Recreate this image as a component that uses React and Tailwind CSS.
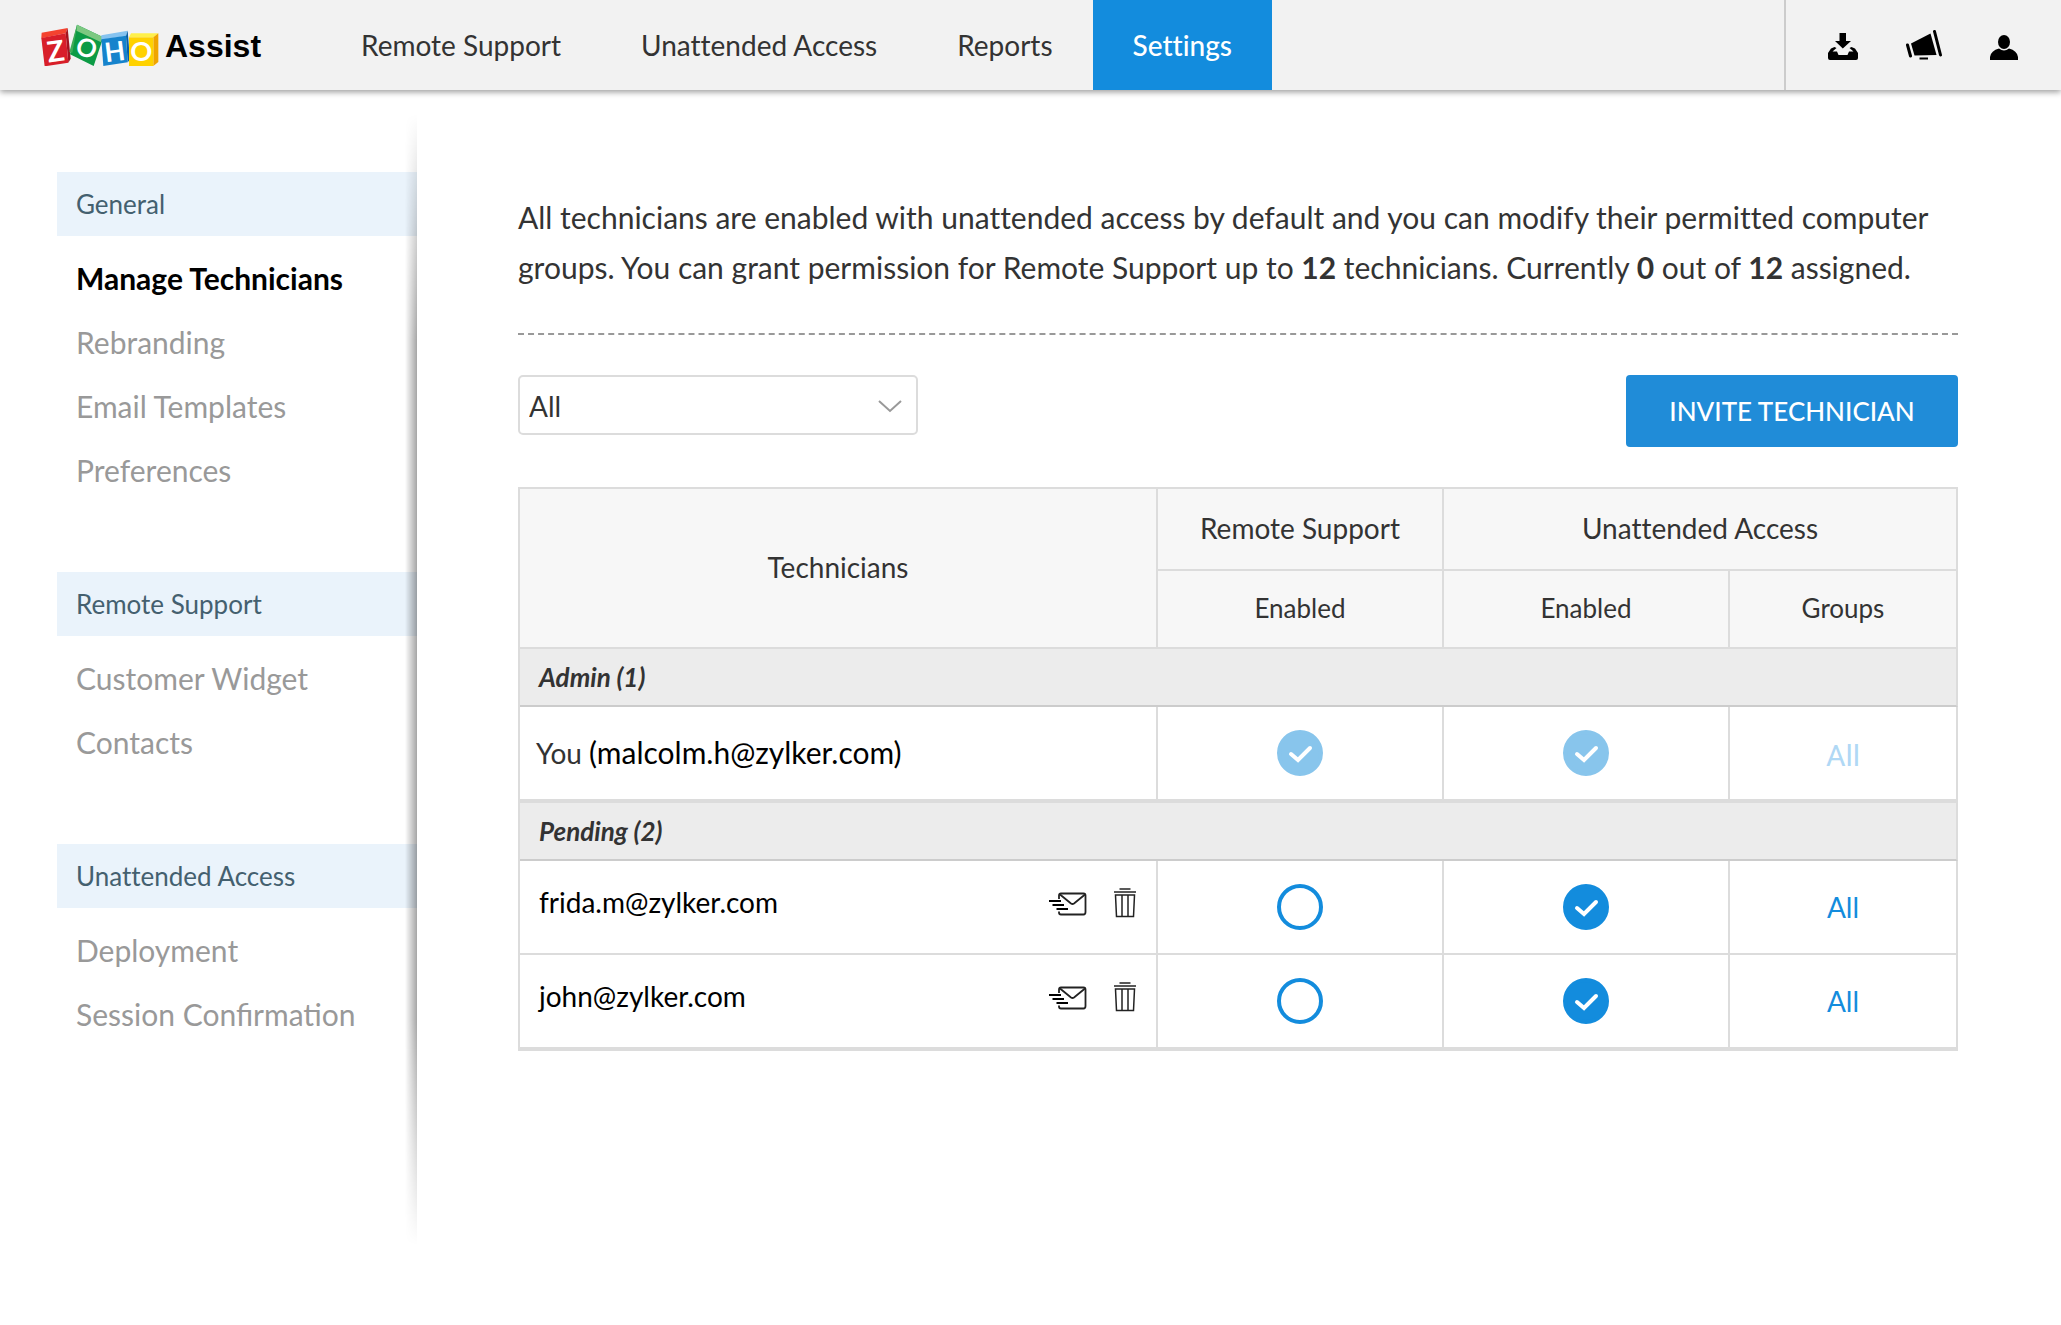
import React, { useState } from "react";

const navItems = ["Remote Support", "Unattended Access", "Reports", "Settings"];

const sections = [
  {
    title: "General",
    items: ["Manage Technicians", "Rebranding", "Email Templates", "Preferences"],
  },
  { title: "Remote Support", items: ["Customer Widget", "Contacts"] },
  { title: "Unattended Access", items: ["Deployment", "Session Confirmation"] },
];

const Logo = () => (
  <svg className="w-[119px] h-[42px]" viewBox="0 0 357 126" aria-hidden="true">
    <g fontFamily="Lato, sans-serif" fontWeight="700" fill="#fff" textAnchor="middle">
      {/* red cube */}
      <path d="M2 26 L80 12 L74 28 L1 43 Z" fill="#f4432f" />
      <path d="M74 28 L80 12 L89 104 L82 116 Z" fill="#a31420" />
      <path d="M1 42 L74 28 L82 116 L11 127 Z" fill="#d81f2a" />
      <text x="44" y="112" fontSize="86" transform="rotate(-8 44 81)">Z</text>
      {/* green cube */}
      <path d="M108 2 L187 40 L158 126 L87 91 Z" fill="#0c9b45" />
      <path d="M108 2 L187 40 L179 54 L106 20 Z" fill="#7cc881" />
      <path d="M108 2 L106 20 L94 86 L85 84 Z" fill="#3fab58" />
      <text x="137" y="99" fontSize="76" transform="rotate(22 137 72)">O</text>
      {/* blue cube */}
      <path d="M181 34 L260 20 L255 36 L181 47 Z" fill="#86c3f0" />
      <path d="M255 36 L260 20 L267 107 L260 115 Z" fill="#0a5fa3" />
      <path d="M181 46 L255 35 L260 115 L187 126 Z" fill="#1683cc" />
      <text x="221" y="111" fontSize="80" transform="rotate(-7 221 82)">H</text>
      {/* yellow cube */}
      <path d="M264 40 L270 28 L352 28 L337 40 Z" fill="#fff04a" />
      <path d="M337 40 L352 28 L352 114 L337 126 Z" fill="#f0a500" />
      <path d="M264 40 H337 V126 H264 Z" fill="#ffd200" />
      <text x="301" y="112" fontSize="82">O</text>
    </g>
  </svg>
);

const DownloadIcon = () => (
  <svg className="w-[30px] h-[27px]" viewBox="0 0 30 27" aria-hidden="true">
    <path d="M11.500 0 H18 V8 H23 L14.800 15.500 L7 8 H11.500 Z" />
    <path d="M6.500 14 L3 15.500 L0 20 V25 Q0 27 2 27 H28 Q30 27 30 25 V20 L27 15.500 L23.500 14 L21.500 15 L25.500 18.500 H21 L19.500 22 H10.500 L9 18.500 H4.500 L8.500 15 Z" />
  </svg>
);

const MegaphoneIcon = () => (
  <svg className="w-[36px] h-[30px]" viewBox="0 0 36 30" aria-hidden="true">
    <path d="M5 13.500 L24.500 3.500 L30.500 25 L8.500 25.500 Z" />
    <path d="M1.500 15 L4.500 26" stroke="#000" strokeWidth="3" strokeLinecap="round" />
    <path d="M28.500 1.500 L34.500 25" stroke="#000" strokeWidth="3" strokeLinecap="round" />
    <path d="M13.500 28.500 H22" stroke="#000" strokeWidth="2" />
  </svg>
);

const UserIcon = () => (
  <svg className="w-[28px] h-[25px]" viewBox="0 0 28 25" aria-hidden="true">
    <ellipse cx="14" cy="7" rx="6" ry="7" />
    <path d="M0 25 V22 Q1 15.500 9 13.500 Q14 17.500 19 13.500 Q27 15.500 28 22 V25 Z" />
  </svg>
);

const SendMailIcon = () => (
  <svg className="w-[38px] h-[24px]" viewBox="0 0 38 24" fill="none" stroke="#222" strokeWidth="1.800" aria-hidden="true">
    <path d="M10 7 V3.500 Q10 1.500 12 1.500 H34.500 Q36.500 1.500 36.500 3.500 V20 Q36.500 22.500 34.500 22.500 H12 Q10 22.500 10 20.500 V19.500" />
    <path d="M11 2.500 L22 11.500 Q23.500 12.500 25 11.500 L36 2.500" />
    <path d="M0 9 H12 M3.500 13 H15 M7.500 17 H19" stroke="#000" />
  </svg>
);

const TrashIcon = () => (
  <svg className="w-[22px] h-[30px]" viewBox="0 0 22 30" fill="none" stroke="#222" strokeWidth="1.500" aria-hidden="true">
    <path d="M5.500 1 H16.500" />
    <path d="M0 4 H22" />
    <path d="M1.500 7 H20.500 L19.500 28.500 H2.500 Z" />
    <path d="M8 7 V28 M14 7 V28" />
  </svg>
);

const Toggle = ({ label, defaultChecked, disabled }) => (
  <div className="relative flex w-[46px] h-[46px] mx-auto">
    <input
      type="checkbox"
      aria-label={label}
      defaultChecked={defaultChecked}
      disabled={disabled}
      className="peer appearance-none w-full h-full rounded-full border-4 border-[#138cdd] bg-white checked:bg-[#138cdd] disabled:border-[#88c5ec] disabled:checked:bg-[#88c5ec]"
    />
    <svg
      className="hidden peer-checked:block absolute inset-0 pointer-events-none"
      viewBox="0 0 46 46"
      fill="none"
      stroke="#fff"
      strokeWidth="4"
      strokeLinecap="round"
      aria-hidden="true"
    >
      <path d="M14 24 L21 30 L33 18" />
    </svg>
  </div>
);

const headCell = "pb-[2px] bg-[#f7f7f7] border-r-2 border-b-2 border-[#dcdcdc] font-normal";
const bodyCell = "border-r-2 border-[#dcdcdc] text-center";

const GroupRow = ({ children }) => (
  <tr className="h-[58px]">
    <th
      colSpan={4}
      scope="colgroup"
      className="bg-[#ececec] border-r-2 border-b-2 border-r-[#dcdcdc] border-b-[#ccc] pl-[19px] text-left text-[26px] font-bold italic"
    >
      {children}
    </th>
  </tr>
);

const PendingRow = ({ email, last }) => {
  const line = last ? "border-b-4" : "border-b-2";
  return (
    <tr className={last ? "h-[96px]" : "h-[94px]"}>
      <td className={`${bodyCell} ${line}`}>
        <div className="flex items-center pl-[19px] pr-[20px] pb-[6px] text-black">
          <span className="flex-1 pb-1 text-left text-[28px]">{email}</span>
          <button type="button" aria-label={`Resend invitation to ${email}`} className="mr-[27px]">
            <SendMailIcon />
          </button>
          <button type="button" aria-label={`Delete ${email}`} className="pb-[2px]">
            <TrashIcon />
          </button>
        </div>
      </td>
      <td className={`${bodyCell} ${line}`}>
        <Toggle label={`Remote Support for ${email}`} />
      </td>
      <td className={`${bodyCell} ${line}`}>
        <Toggle label={`Unattended Access for ${email}`} defaultChecked />
      </td>
      <td className={`${bodyCell} ${line}`}>
        <a href="#groups" className="text-[28px] text-[#138cdd]">All</a>
      </td>
    </tr>
  );
};

const App = () => {
  const [filter, setFilter] = useState("All");

  return (
    <div className="min-h-screen bg-white font-['Lato',sans-serif] text-[#333] [font-variant-ligatures:no-common-ligatures]">
      <header className="relative flex h-[90px] bg-[#f2f2f2] shadow-[0_2px_6px_rgba(0,0,0,0.4)]">
        <a href="#home" className="flex items-center w-[321px] pl-[41px] text-black">
          <Logo />
          <span className="ml-[5px] pt-[2px] font-['Liberation_Sans',sans-serif] text-[32px] font-bold">Assist</span>
        </a>
        <nav className="flex flex-1">
          {navItems.map((item) => (
            <a
              key={item}
              href="#nav"
              className={`flex items-center px-10 text-[28px] ${
                item === "Settings" ? "bg-[#138cdd] font-medium text-white" : ""
              }`}
            >
              {item}
            </a>
          ))}
        </nav>
        <div className="flex items-end gap-12 pl-[42px] pr-[43px] pb-[30px] border-l-2 border-[#ccc]">
          <button type="button" aria-label="Downloads"><DownloadIcon /></button>
          <button type="button" aria-label="Announcements"><MegaphoneIcon /></button>
          <button type="button" aria-label="Account"><UserIcon /></button>
        </div>
      </header>

      <div className="flex">
        <aside className="relative shrink-0 w-[417px] h-[1155px] pt-[82px] pl-[57px]">
          {sections.map((section) => (
            <section key={section.title} className="mb-[70px]">
              <h2 className="flex items-center h-16 mb-[10px] pl-[19px] bg-[#eaf3fb] text-[26px] text-[#44606f]">
                {section.title}
              </h2>
              <ul className="[font-variant-ligatures:normal]">
                {section.items.map((item) => (
                  <li key={item} className="flex items-center h-16 pl-[19px] text-[30px]">
                    <a
                      href="#settings"
                      className={item === "Manage Technicians" ? "font-bold text-black" : "text-[#999]"}
                    >
                      {item}
                    </a>
                  </li>
                ))}
              </ul>
            </section>
          ))}
          <div className="absolute right-0 top-6 bottom-0 w-3 bg-linear-to-l from-black/35 to-transparent mask-y-from-80% mask-y-to-100%" />
        </aside>

        <main className="flex-1 pt-[102px] pl-[101px] pr-[103px]">
          <p className="text-[30px] leading-[50px]">
            All technicians are enabled with unattended access by default and you can modify their permitted computer
            groups. You can grant permission for Remote Support up to <b>12</b> technicians. Currently <b>0</b> out of{" "}
            <b>12</b> assigned.
          </p>

          <div className="mt-[41px] pt-10 flex items-start justify-between border-t-2 border-dashed border-[#999]">
            <div className="relative w-[400px]">
              <select
                aria-label="Filter technicians"
                value={filter}
                onChange={(e) => setFilter(e.target.value)}
                className="appearance-none w-full h-[60px] pt-[2px] pl-[9px] border-2 border-[#dcdcdc] rounded-[5px] bg-white text-[28px]"
              >
                <option>All</option>
                <option>Admin</option>
                <option>Pending</option>
              </select>
              <svg
                className="absolute right-4 top-[25px] w-6 h-[14px] pointer-events-none"
                viewBox="0 0 24 14"
                fill="none"
                stroke="#999"
                strokeWidth="2"
                aria-hidden="true"
              >
                <path d="M1 1 L12 11 L23 1" />
              </svg>
            </div>
            <button type="button" className="w-[332px] h-[72px] rounded bg-[#208cd8] text-[26px] font-medium text-white">
              INVITE TECHNICIAN
            </button>
          </div>

          <table className="mt-10 w-full table-fixed border-separate border-spacing-0 border-t-2 border-l-2 border-[#dcdcdc]">
            <colgroup>
              <col />
              <col className="w-[286px]" />
              <col className="w-[286px]" />
              <col className="w-[228px]" />
            </colgroup>
            <thead>
              <tr className="h-[82px] text-[28px]">
                <th rowSpan={2} className={headCell}>Technicians</th>
                <th className={headCell}>Remote Support</th>
                <th colSpan={2} className={headCell}>Unattended Access</th>
              </tr>
              <tr className="h-[78px] text-[26px]">
                <th className={headCell}>Enabled</th>
                <th className={headCell}>Enabled</th>
                <th className={headCell}>Groups</th>
              </tr>
            </thead>
            <tbody>
              <GroupRow>Admin (1)</GroupRow>
              <tr className="h-[96px]">
                <td className={`${bodyCell} border-b-4`}>
                  <div className="pl-4 pb-[2px] text-left text-[28px]">
                    You <span className="text-[30px] text-black">(malcolm.h@zylker.com)</span>
                  </div>
                </td>
                <td className={`${bodyCell} border-b-4`}>
                  <Toggle label="Remote Support for you" defaultChecked disabled />
                </td>
                <td className={`${bodyCell} border-b-4`}>
                  <Toggle label="Unattended Access for you" defaultChecked disabled />
                </td>
                <td className={`${bodyCell} border-b-4 pt-1`}>
                  <span className="font-['Roboto',sans-serif] text-[30px] text-[#b0d8f5]">All</span>
                </td>
              </tr>
              <GroupRow>Pending (2)</GroupRow>
              <PendingRow email="frida.m@zylker.com" />
              <PendingRow email="john@zylker.com" last />
            </tbody>
          </table>
        </main>
      </div>
    </div>
  );
};

export default App;
